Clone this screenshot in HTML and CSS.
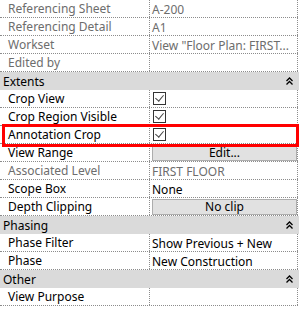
FILE: index.html
```html
<!DOCTYPE html>
<html lang="en">
<head>
    <meta charset="UTF-8">
    <title>Properties</title>
    <link rel="stylesheet" href="styles.css">
</head>
<body>
    <div class="props">
        <div class="row"><div class="name ro">Referencing Sheet</div><div class="value ro">A-200</div></div>
        <div class="row"><div class="name ro">Referencing Detail</div><div class="value ro">A1</div></div>
        <div class="row"><div class="name ro">Workset</div><div class="value ro">View "Floor Plan: FIRST...</div></div>
        <div class="row"><div class="name ro">Edited by</div><div class="value ro"></div></div>

        <div class="group">Extents<span class="fold"><svg width="7" height="8" viewBox="0 0 7 8"><path d="M0.5 4 L3.5 1 L6.5 4 M0.5 7.5 L3.5 4.5 L6.5 7.5" fill="none" stroke="#000" stroke-width="1.3"/></svg></span></div>
        <div class="row"><div class="name">Crop View</div><div class="value"><span class="check"></span></div></div>
        <div class="row"><div class="name">Crop Region Visible</div><div class="value"><span class="check"></span></div></div>
        <div class="row"><div class="name">Annotation Crop</div><div class="value"><span class="check"></span></div></div>
        <div class="row"><div class="name">View Range</div><div class="value"><button type="button" class="btn">Edit...</button></div></div>
        <div class="row"><div class="name ro">Associated Level</div><div class="value ro">FIRST FLOOR</div></div>
        <div class="row"><div class="name">Scope Box</div><div class="value">None</div></div>
        <div class="row"><div class="name">Depth Clipping</div><div class="value"><button type="button" class="btn">No clip</button></div></div>

        <div class="group">Phasing<span class="fold"><svg width="7" height="8" viewBox="0 0 7 8"><path d="M0.5 4 L3.5 1 L6.5 4 M0.5 7.5 L3.5 4.5 L6.5 7.5" fill="none" stroke="#000" stroke-width="1.3"/></svg></span></div>
        <div class="row"><div class="name">Phase Filter</div><div class="value">Show Previous + New</div></div>
        <div class="row"><div class="name">Phase</div><div class="value">New Construction</div></div>

        <div class="group">Other<span class="fold"><svg width="7" height="8" viewBox="0 0 7 8"><path d="M0.5 4 L3.5 1 L6.5 4 M0.5 7.5 L3.5 4.5 L6.5 7.5" fill="none" stroke="#000" stroke-width="1.3"/></svg></span></div>
        <div class="row"><div class="name">View Purpose</div><div class="value"></div></div>

        <div class="mark"></div>
    </div>
</body>
</html>
```

FILE: styles.css
```css
body{
    margin: 0;
    background-color: #fff;
}
.props{
    position: relative;
    width: 299px;
    font-family: "Noto Sans", "Open Sans", sans-serif;
    font-size: 12px;
    color: #000;
}
.row{
    display: flex;
    height: 17px;
    border-bottom: 1px dotted #8c8c8c;
    width: 298px;
}
.name{
    width: 141px;
    padding-left: 8px;
    border-right: 1px dotted #8c8c8c;
    line-height: 18px;
    white-space: nowrap;
    overflow: hidden;
}
.value{
    flex: 1;
    display: flex;
    align-items: center;
    padding-left: 2px;
    padding-top: 1px;
    border-right: 1px dotted #8c8c8c;
    white-space: nowrap;
    overflow: hidden;
}
.ro{
    color: #6d6d6d;
}
.group{
    display: flex;
    justify-content: space-between;
    align-items: center;
    height: 18px;
    padding-left: 3px;
    padding-right: 6px;
    background-color: #dadada;
}
.fold{
    display: flex;
}
.check{
    position: relative;
    width: 11px;
    height: 11px;
    margin-left: 1px;
    margin-top: -1px;
    border: 1px solid #333;
    background-color: #fff;
}
.check::after{
    content: "";
    position: absolute;
    left: 3px;
    top: 0px;
    width: 4px;
    height: 7px;
    border-right: 1px solid #444;
    border-bottom: 1px solid #444;
    transform: rotate(40deg);
}
.btn{
    width: 146px;
    height: 16px;
    margin: -1px 0 0 0;
    padding: 0;
    border: 1px solid #adadad;
    background-color: #e1e1e1;
    font-family: inherit;
    font-size: 12px;
    line-height: 14px;
    color: #000;
}
.mark{
    position: absolute;
    left: 2px;
    top: 124px;
    width: 291px;
    height: 17px;
    border: 3px solid #f00;
}
```
